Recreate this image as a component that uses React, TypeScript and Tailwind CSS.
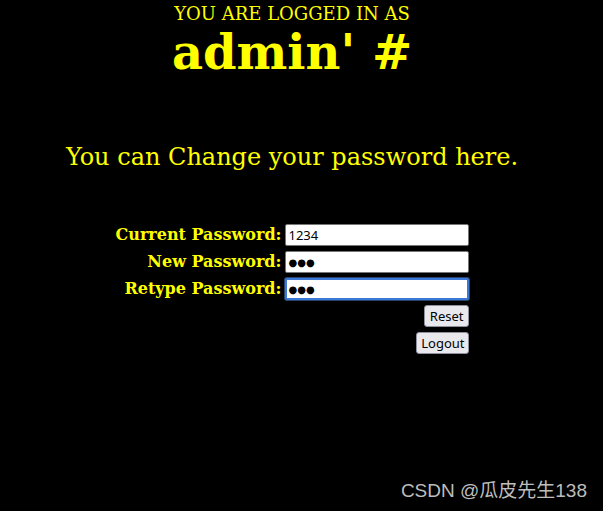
const base = "h-[22px] w-[184px] rounded-[2px] bg-white text-black outline-none";
const plain = `${base} border border-[#767676] px-[2px]`;
const focused = `${base} border-2 border-[#3b78d8] px-[1px] shadow-[0_0_0_1px_#29446b]`;
const btn =
  "h-[22px] rounded-[3px] border border-[#8f8f9d] bg-[#e9e9ed] font-['Noto_Sans',sans-serif] text-[13px] leading-none text-black";

export default function App() {
  return (
    <div className="relative h-[511px] w-full overflow-hidden bg-black font-['DejaVu_Serif',serif] text-[#ffff00]">
      <div className="w-[584px] text-center">
        <div className="pt-[3px] text-[18px] leading-[22px]">YOU ARE LOGGED IN AS</div>
        <div className="text-[48px] font-bold leading-[54px]">admin' #</div>
        <div className="mt-[64px] text-[24px] leading-[28px]">You can Change your password here.</div>
      </div>

      <div className="mt-[53px] flex w-[584px] justify-center">
        <div className="ml-[1px] flex flex-col items-end gap-[5px]">
          <div className="flex h-[22px] items-center gap-[4px]">
            <span className="text-[16px] font-bold leading-[22px]">Current Password:</span>
            <input
              type="text"
              defaultValue="1234"
              className={`${plain} font-['Noto_Sans',sans-serif] text-[13px]`}
            />
          </div>
          <div className="flex h-[22px] items-center gap-[4px]">
            <span className="text-[16px] font-bold leading-[22px]">New Password:</span>
            <input
              type="text"
              readOnly
              value="●●●"
              className={`${plain} font-['DejaVu_Sans',sans-serif] text-[10px]`}
            />
          </div>
          <div className="flex h-[22px] items-center gap-[4px]">
            <span className="text-[16px] font-bold leading-[22px]">Retype Password:</span>
            <input
              type="text"
              readOnly
              value="●●●"
              className={`${focused} font-['DejaVu_Sans',sans-serif] text-[10px]`}
            />
          </div>
          <button className={`${btn} px-[5px]`}>Reset</button>
          <button className={`${btn} px-[4px]`}>Logout</button>
        </div>
      </div>

      <div className="absolute bottom-[8px] right-[16px] font-['Liberation_Sans','Noto_Sans_CJK_SC',sans-serif] text-[19px] leading-[24px] text-[#bdbdbd]">
        CSDN @瓜皮先生138
      </div>
    </div>
  );
}
